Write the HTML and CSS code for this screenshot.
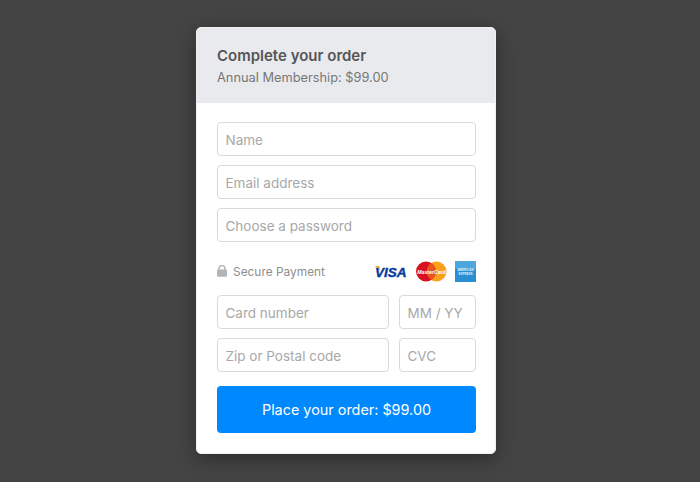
FILE: index.html
```html
<!DOCTYPE html>
<html lang="en">
<head>
<meta charset="utf-8">
<title>Complete your order</title>
<link rel="stylesheet" href="styles.css">
</head>
<body>
<main class="card">
  <header class="card-head">
    <h1 class="title">Complete your order</h1>
    <p class="subtitle">Annual Membership: $99.00</p>
  </header>
  <form class="form">
    <input class="field" type="text" placeholder="Name">
    <input class="field" type="text" placeholder="Email address">
    <input class="field" type="text" placeholder="Choose a password">
    <div class="secure-row">
      <div class="secure">
        <svg class="lock" width="10" height="12" viewBox="0 0 10 12"><path d="M2 5V3.400C2 1.700 3.300.6 5 .6s3 1.100 3 2.800V5" fill="none" stroke="#b4b4b6" stroke-width="1.500"/><rect x="0" y="4.600" width="10" height="7.200" rx="1" fill="#b4b4b6"/></svg>
        <span>Secure Payment</span>
      </div>
      <div class="brands">
        <svg class="visa" width="32" height="14" viewBox="0 0 32 14"><path d="M0 2h3.200c.7 0 1.100.3 1.300 1l.8 4C4.500 4.800 2.500 3 0 2.400z" fill="#f2a51e"/><text class="visa-text" x="31.500" y="12.500" text-anchor="end">VISA</text></svg>
        <svg class="mc" width="31" height="21" viewBox="0 0 31 21"><circle cx="20.500" cy="10.500" r="10" fill="#f9a11b"/><circle cx="10" cy="10.500" r="10" fill="#d9101f"/><path d="M15.250 2a10 10 0 0 1 0 17 10 10 0 0 1 0-17z" fill="#e8561a"/><text class="mc-text" x="15.500" y="12.500" text-anchor="middle">MasterCard</text></svg>
        <svg class="amex" width="21" height="21" viewBox="0 0 21 21"><rect width="21" height="21" fill="#2a8fd2"/><rect width="21" height="8" fill="#4ea6de"/><text class="amex-text" x="10.500" y="10" text-anchor="middle">AMERICAN</text><text class="amex-text" x="10.500" y="14" text-anchor="middle">EXPRESS</text></svg>
      </div>
    </div>
    <div class="pair">
      <input class="field grow" type="text" placeholder="Card number">
      <input class="field short" type="text" placeholder="MM / YY">
    </div>
    <div class="pair">
      <input class="field grow" type="text" placeholder="Zip or Postal code">
      <input class="field short" type="text" placeholder="CVC">
    </div>
    <button class="submit" type="button">Place your order: $99.00</button>
  </form>
</main>
</body>
</html>
```
FILE: styles.css
```css
* { box-sizing: border-box; }
html, body { margin: 0; height: 100%; }
body {
  background: #444444;
  font-family: Inter, "Liberation Sans", sans-serif;
  display: flex;
  justify-content: center;
  align-items: flex-start;
  padding: 27px 8px 0 0;
  overflow: hidden;
}
.card {
  width: 300px;
  height: 427px;
  background: #fff;
  border: 1px solid #f0f0f0;
  border-radius: 5px;
  box-shadow: 0 5px 20px rgba(0, 0, 0, .35);
  overflow: hidden;
}
.card-head {
  height: 75px;
  background: #e9eaee;
  padding: 19px 20px 0;
}
.title {
  margin: 0;
  font-size: 15px;
  line-height: 18px;
  font-weight: 600;
  color: #555;
}
.subtitle {
  margin: 5px 0 0;
  font-size: 12.800px;
  line-height: 16px;
  color: #777;
}
.form {
  padding: 19px 19px 0 20px;
  display: flex;
  flex-direction: column;
  gap: 9px;
}
.field {
  display: block;
  width: 100%;
  height: 34px;
  padding: 1px 8px 0 7.500px;
  border: 1px solid #d9d9d9;
  border-radius: 4px;
  background: #fff;
  font-family: inherit;
  font-size: 13.500px;
  color: #555;
  outline: none;
}
.field::placeholder { color: #a8a8a8; opacity: 1; }
.secure-row {
  height: 35px;
  padding-top: 5px;
  display: flex;
  align-items: center;
  justify-content: space-between;
}
.secure {
  display: flex;
  align-items: center;
  gap: 6px;
  font-size: 11.900px;
  color: #8f8f8f;
}
.brands { display: flex; align-items: center; }
.brands svg { overflow: visible; flex: none; }
.visa { margin-right: 9px; }
.mc { margin-right: 8px; }
.visa-text {
  font: italic 700 13.500px "Liberation Sans", sans-serif;
  fill: #0a3a9c;
  stroke: #0a3a9c;
  stroke-width: .4px;
}
.mc-text {
  font: italic 700 5.200px "Liberation Sans", sans-serif;
  fill: #fff;
}
.amex-text {
  font: 700 3px "Liberation Sans", sans-serif;
  fill: #e4f2fb;
}
.pair { display: flex; gap: 10px; }
.grow { flex: 1; min-width: 0; }
.short { width: 77px; flex: none; }
.submit {
  height: 47px;
  margin-top: 5px;
  border: 0;
  border-radius: 4px;
  background: #0088ff;
  color: #fff;
  font-family: inherit;
  font-size: 14.400px;
}
```
